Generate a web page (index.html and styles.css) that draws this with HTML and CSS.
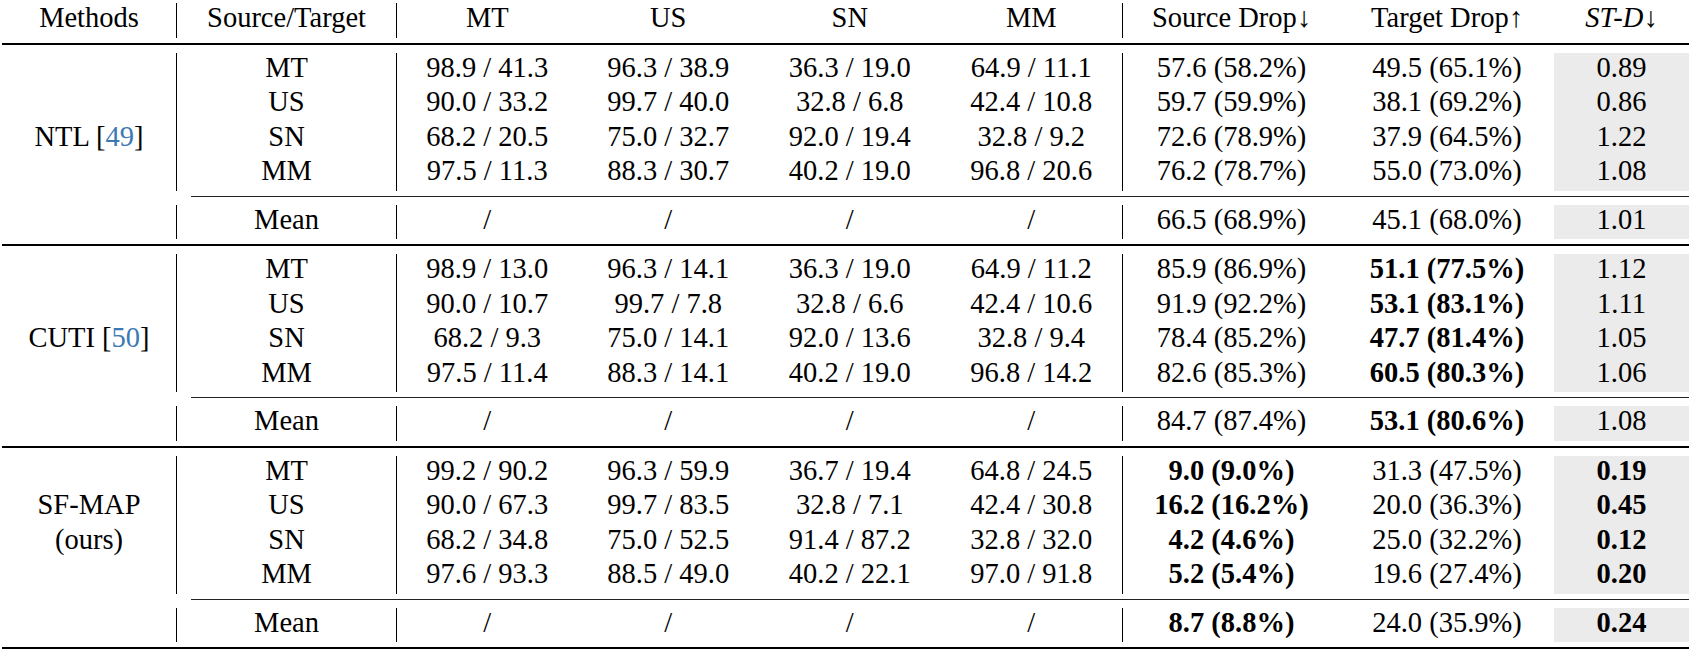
FILE: index.html
```html
<!DOCTYPE html>
<html lang="en">
<head>
  <meta charset="UTF-8" />
  <meta name="viewport" content="width=device-width, initial-scale=1.0"/>
  <title>Source/Target drop results</title>
  <link rel="stylesheet" href="styles.css">
</head>
<body>
  <table class="results">
    <colgroup>
      <col class="c-method">
      <col class="c-pair">
      <col class="c-acc"><col class="c-acc"><col class="c-acc"><col class="c-acc">
      <col class="c-src">
      <col class="c-tgt">
      <col class="c-std">
    </colgroup>

    <thead>
      <tr class="head">
        <th>Methods</th>
        <th class="bar">Source/Target</th>
        <th class="bar">MT</th>
        <th>US</th>
        <th>SN</th>
        <th>MM</th>
        <th class="bar">Source Drop↓</th>
        <th>Target Drop↑</th>
        <th><em>ST-D</em>↓</th>
      </tr>
      <tr class="gap-a"><td colspan="9"></td></tr>
      <tr class="rule"><td colspan="9"></td></tr>
    </thead>

    <!-- NTL -->
    <tbody>
      <tr class="gap-b"><td colspan="9"></td></tr>
      <tr>
        <td></td>
        <td class="bar">MT</td>
        <td class="bar">98.9 / 41.3</td><td>96.3 / 38.9</td><td>36.3 / 19.0</td><td>64.9 / 11.1</td>
        <td class="bar">57.6 (58.2%)</td><td>49.5 (65.1%)</td><td class="std">0.89</td>
      </tr>
      <tr>
        <td></td>
        <td class="bar">US</td>
        <td class="bar">90.0 / 33.2</td><td>99.7 / 40.0</td><td>32.8 / 6.8</td><td>42.4 / 10.8</td>
        <td class="bar">59.7 (59.9%)</td><td>38.1 (69.2%)</td><td class="std">0.86</td>
      </tr>
      <tr>
        <td>NTL [<span class="cite">49</span>]</td>
        <td class="bar">SN</td>
        <td class="bar">68.2 / 20.5</td><td>75.0 / 32.7</td><td>92.0 / 19.4</td><td>32.8 / 9.2</td>
        <td class="bar">72.6 (78.9%)</td><td>37.9 (64.5%)</td><td class="std">1.22</td>
      </tr>
      <tr>
        <td></td>
        <td class="bar">MM</td>
        <td class="bar">97.5 / 11.3</td><td>88.3 / 30.7</td><td>40.2 / 19.0</td><td>96.8 / 20.6</td>
        <td class="bar">76.2 (78.7%)</td><td>55.0 (73.0%)</td><td class="std">1.08</td>
      </tr>
      <tr class="gap-a"><td colspan="9"></td></tr>
      <tr class="cmid"><td></td><td colspan="8"><div></div></td></tr>
      <tr class="gap-b"><td colspan="9"></td></tr>
      <tr>
        <td></td>
        <td class="bar">Mean</td>
        <td class="bar">/</td><td>/</td><td>/</td><td>/</td>
        <td class="bar">66.5 (68.9%)</td><td>45.1 (68.0%)</td><td class="std">1.01</td>
      </tr>
      <tr class="gap-a"><td colspan="9"></td></tr>
      <tr class="rule"><td colspan="9"></td></tr>
    </tbody>

    <!-- CUTI -->
    <tbody>
      <tr class="gap-b"><td colspan="9"></td></tr>
      <tr>
        <td></td>
        <td class="bar">MT</td>
        <td class="bar">98.9 / 13.0</td><td>96.3 / 14.1</td><td>36.3 / 19.0</td><td>64.9 / 11.2</td>
        <td class="bar">85.9 (86.9%)</td><td><b>51.1 (77.5%)</b></td><td class="std">1.12</td>
      </tr>
      <tr>
        <td></td>
        <td class="bar">US</td>
        <td class="bar">90.0 / 10.7</td><td>99.7 / 7.8</td><td>32.8 / 6.6</td><td>42.4 / 10.6</td>
        <td class="bar">91.9 (92.2%)</td><td><b>53.1 (83.1%)</b></td><td class="std">1.11</td>
      </tr>
      <tr>
        <td>CUTI [<span class="cite">50</span>]</td>
        <td class="bar">SN</td>
        <td class="bar">68.2 / 9.3</td><td>75.0 / 14.1</td><td>92.0 / 13.6</td><td>32.8 / 9.4</td>
        <td class="bar">78.4 (85.2%)</td><td><b>47.7 (81.4%)</b></td><td class="std">1.05</td>
      </tr>
      <tr>
        <td></td>
        <td class="bar">MM</td>
        <td class="bar">97.5 / 11.4</td><td>88.3 / 14.1</td><td>40.2 / 19.0</td><td>96.8 / 14.2</td>
        <td class="bar">82.6 (85.3%)</td><td><b>60.5 (80.3%)</b></td><td class="std">1.06</td>
      </tr>
      <tr class="gap-a"><td colspan="9"></td></tr>
      <tr class="cmid"><td></td><td colspan="8"><div></div></td></tr>
      <tr class="gap-b"><td colspan="9"></td></tr>
      <tr>
        <td></td>
        <td class="bar">Mean</td>
        <td class="bar">/</td><td>/</td><td>/</td><td>/</td>
        <td class="bar">84.7 (87.4%)</td><td><b>53.1 (80.6%)</b></td><td class="std">1.08</td>
      </tr>
      <tr class="gap-a"><td colspan="9"></td></tr>
      <tr class="rule"><td colspan="9"></td></tr>
    </tbody>

    <!-- SF-MAP -->
    <tbody>
      <tr class="gap-b"><td colspan="9"></td></tr>
      <tr>
        <td></td>
        <td class="bar">MT</td>
        <td class="bar">99.2 / 90.2</td><td>96.3 / 59.9</td><td>36.7 / 19.4</td><td>64.8 / 24.5</td>
        <td class="bar"><b>9.0 (9.0%)</b></td><td>31.3 (47.5%)</td><td class="std"><b>0.19</b></td>
      </tr>
      <tr>
        <td>SF-MAP</td>
        <td class="bar">US</td>
        <td class="bar">90.0 / 67.3</td><td>99.7 / 83.5</td><td>32.8 / 7.1</td><td>42.4 / 30.8</td>
        <td class="bar"><b>16.2 (16.2%)</b></td><td>20.0 (36.3%)</td><td class="std"><b>0.45</b></td>
      </tr>
      <tr>
        <td>(ours)</td>
        <td class="bar">SN</td>
        <td class="bar">68.2 / 34.8</td><td>75.0 / 52.5</td><td>91.4 / 87.2</td><td>32.8 / 32.0</td>
        <td class="bar"><b>4.2 (4.6%)</b></td><td>25.0 (32.2%)</td><td class="std"><b>0.12</b></td>
      </tr>
      <tr>
        <td></td>
        <td class="bar">MM</td>
        <td class="bar">97.6 / 93.3</td><td>88.5 / 49.0</td><td>40.2 / 22.1</td><td>97.0 / 91.8</td>
        <td class="bar"><b>5.2 (5.4%)</b></td><td>19.6 (27.4%)</td><td class="std"><b>0.20</b></td>
      </tr>
      <tr class="gap-a"><td colspan="9"></td></tr>
      <tr class="cmid"><td></td><td colspan="8"><div></div></td></tr>
      <tr class="gap-b"><td colspan="9"></td></tr>
      <tr>
        <td></td>
        <td class="bar">Mean</td>
        <td class="bar">/</td><td>/</td><td>/</td><td>/</td>
        <td class="bar"><b>8.7 (8.8%)</b></td><td>24.0 (35.9%)</td><td class="std"><b>0.24</b></td>
      </tr>
      <tr class="gap-a"><td colspan="9"></td></tr>
      <tr class="rule"><td colspan="9"></td></tr>
    </tbody>
  </table>
</body>
</html>
```

FILE: styles.css
```css
body {
  margin: 0;
  padding: 0;
  background: #fff;
  color: #000;
  font-family: 'Liberation Serif', 'Times New Roman', serif;
}

.results {
  margin: 3px 0 0 2px;
  width: 1687px;
  table-layout: fixed;
  border-collapse: separate;
  border-spacing: 0;
  font-size: 28.5px;
}

.c-method { width: 174px; }
.c-pair { width: 220px; }
.c-acc { width: 181.5px; }
.c-src { width: 218px; }
.c-tgt { width: 214px; }
.c-std { width: 135px; }

.results th,
.results td {
  padding: 0 0 5.5px;
  line-height: 29px;
  text-align: center;
  white-space: nowrap;
  font-weight: normal;
}

.results b {
  font-weight: bold;
}

/* vertical bars (broken around the rules, like booktabs) */
.results .bar {
  border-left: 1px solid #000;
}

.results .std {
  background: #ebebeb;
}

.cite {
  color: #3c79b4;
}

/* spacing around rules */
.results .gap-a td,
.results .gap-b td,
.results .rule td,
.results .cmid td {
  padding: 0;
  line-height: 0;
  font-size: 0;
  height: 0;
}

.results .gap-a td { height: 5px; }
.results .gap-b td { height: 8px; }

.results .rule td {
  border-top: 2px solid #000;
}

.results .cmid div {
  margin-left: 15px;
  border-top: 1px solid #222;
}
```
